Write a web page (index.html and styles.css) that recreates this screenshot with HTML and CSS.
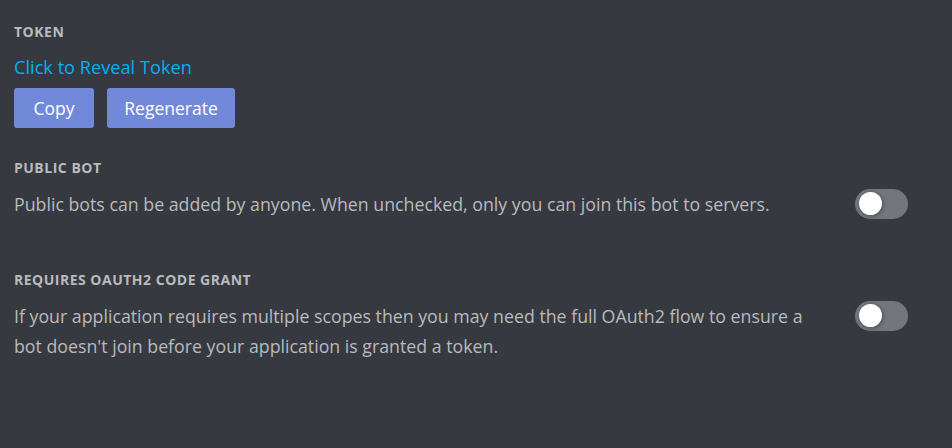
FILE: index.html
```html
<!DOCTYPE html>
<html>
<head>
<meta charset="utf-8">
<link rel="stylesheet" href="styles.css">
</head>
<body>
<div class="page">
  <section class="block token">
    <h5 class="label">Token</h5>
    <a class="reveal">Click to Reveal Token</a>
    <div class="buttons">
      <button class="btn btn-copy">Copy</button>
      <button class="btn btn-regen">Regenerate</button>
    </div>
  </section>
  <section class="block public">
    <h5 class="label">Public Bot</h5>
    <div class="row">
      <p class="desc">Public bots can be added by anyone. When unchecked, only you can join this bot to servers.</p>
      <div class="switch"><span class="knob"></span></div>
    </div>
  </section>
  <section class="block oauth">
    <h5 class="label">Requires OAuth2 Code Grant</h5>
    <div class="row">
      <p class="desc">If your application requires multiple scopes then you may need the full OAuth2 flow to ensure a bot doesn't join before your application is granted a token.</p>
      <div class="switch"><span class="knob"></span></div>
    </div>
  </section>
</div>
</body>
</html>
```
FILE: styles.css
```css
html, body {
  margin: 0;
  padding: 0;
  background: #36393f;
}
body {
  font-family: "Open Sans", "Noto Sans", sans-serif;
  width: 952px;
  height: 448px;
  overflow: hidden;
}
.page {
  padding: 23px 44px 0 14px;
  display: flex;
  flex-direction: column;
}
.label {
  margin: 0;
  font-size: 14px;
  line-height: 18px;
  font-weight: 700;
  text-transform: uppercase;
  letter-spacing: 0.5px;
  color: #b9bbbe;
}
.reveal {
  display: block;
  margin-top: 14px;
  font-size: 18.2px;
  line-height: 24px;
  color: #00b0f4;
  cursor: pointer;
}
.buttons {
  display: flex;
  gap: 13px;
  margin-top: 9px;
}
.btn {
  height: 40px;
  border: none;
  border-radius: 3px;
  background: #7289da;
  color: #fff;
  font-family: inherit;
  font-size: 17.5px;
  padding: 0;
}
.btn-copy { width: 80px; }
.btn-regen { width: 128px; }
.block.public { margin-top: 31px; }
.block.oauth { margin-top: 52px; }
.row {
  display: flex;
  justify-content: space-between;
  align-items: flex-start;
  margin-top: 12px;
}
.desc {
  margin: 0;
  width: 800px;
  font-size: 17.75px;
  line-height: 30px;
  color: #b9bbbe;
}
.switch {
  flex: none;
  width: 53px;
  height: 30px;
  border-radius: 15px;
  background: #72767d;
  position: relative;
}
.knob {
  position: absolute;
  left: 4px;
  top: 3px;
  width: 23px;
  height: 23px;
  border-radius: 50%;
  background: #fff;
  box-shadow: 1px 1px 4px rgba(0,0,0,0.35);
}
```
